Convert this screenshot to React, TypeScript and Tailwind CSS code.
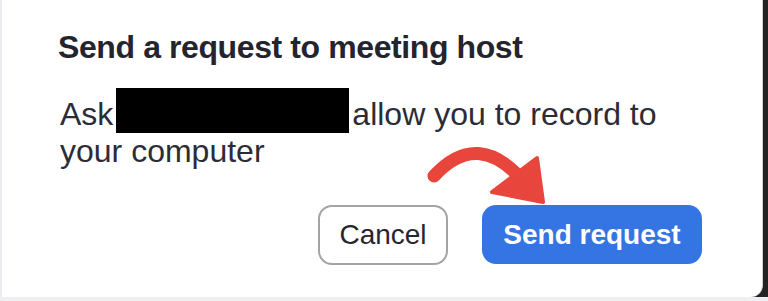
import React from 'react';

export default function App() {
  return (
    <div className="w-[768px] h-[301px] bg-[#efeff1] flex flex-col overflow-hidden" style={{ fontFamily: '"Liberation Sans", Arial, sans-serif' }}>
      <div className="flex h-[297px] bg-[#232323]">
        <div className="relative flex-1 bg-white border-l-2 border-[#ececf0] border-r border-r-[#d0d0d0] rounded-br-[12px] pl-[56px] pr-[60px] pt-[26px] flex flex-col">
          <h1 className="text-[32px] font-bold text-[#24242e] tracking-[-0.4px] leading-[42px]">Send a request to meeting host</h1>

          <p className="mt-[20px] text-[32px] leading-[37px] text-[#2c2c36] pl-[2px]">
            Ask<span className="inline-block align-[-8px] w-[233px] h-[45px] bg-black mx-[3px]"></span>allow you to record to your computer
          </p>

          <div className="mt-auto mb-[32px] flex justify-end gap-[34px]">
            <button className="w-[130px] h-[60px] rounded-[14px] border-2 border-[#a4a4a8] bg-white text-[28px] text-[#26262e]">Cancel</button>
            <button className="w-[220px] h-[59px] rounded-[14px] bg-[#3474e3] text-[28px] font-bold text-white">Send request</button>
          </div>

          <svg className="absolute left-[420px] top-[136px]" width="140" height="79" viewBox="0 0 140 79">
            <path d="M12 40 Q 56 -8 102 46" fill="none" stroke="#e8463c" strokeWidth="13" strokeLinecap="round" />
            <path d="M115 22 L 121 66 L 70 56 Z" fill="#e8463c" stroke="#e8463c" strokeWidth="4" strokeLinejoin="round" />
          </svg>
        </div>
        <div className="w-[5px]"></div>
      </div>
    </div>
  );
}
